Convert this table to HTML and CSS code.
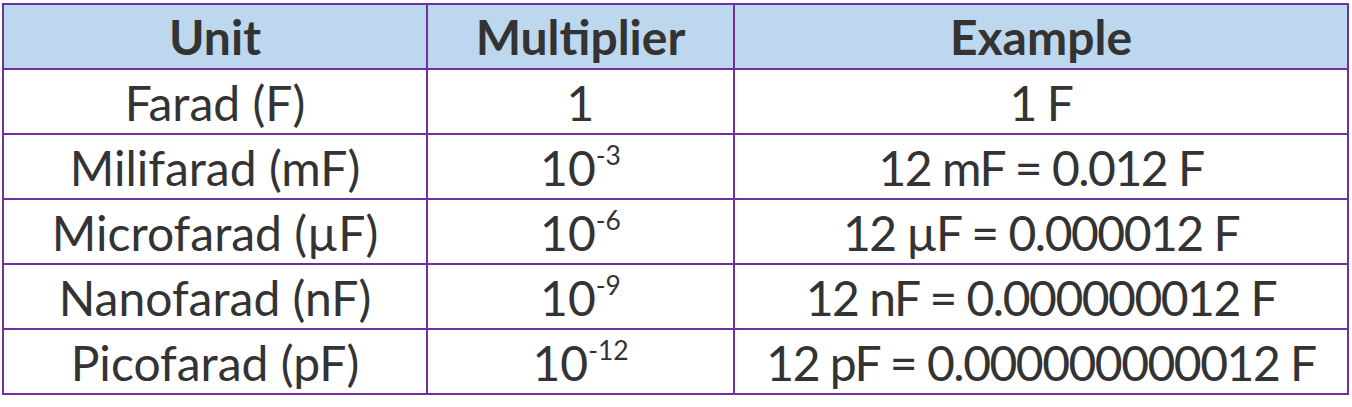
FILE: index.html
```html
<!DOCTYPE html>
<html>
<head>
<meta charset="utf-8">
<link rel="stylesheet" href="styles.css">
</head>
<body>
<table class="units">
  <colgroup>
    <col class="c1">
    <col class="c2">
    <col class="c3">
  </colgroup>
  <thead>
    <tr><th>Unit</th><th>Multiplier</th><th>Example</th></tr>
  </thead>
  <tbody>
    <tr><td>Farad (F)</td><td>1</td><td class="ex">1 F</td></tr>
    <tr><td>Milifarad (mF)</td><td>10<sup>-3</sup></td><td class="ex">12 mF = 0.012 F</td></tr>
    <tr><td>Microfarad (µF)</td><td>10<sup>-6</sup></td><td class="ex">12 µF = 0.000012 F</td></tr>
    <tr><td>Nanofarad (nF)</td><td>10<sup>-9</sup></td><td class="ex">12 nF = 0.000000012 F</td></tr>
    <tr><td>Picofarad (pF)</td><td>10<sup>-12</sup></td><td class="ex">12 pF = 0.000000000012 F</td></tr>
  </tbody>
</table>
</body>
</html>
```
FILE: styles.css
```css
html, body {
  margin: 0;
  padding: 0;
  background: #ffffff;
}

.units {
  margin: 3px 0 0 2px;
  width: 1345px;
  border-collapse: collapse;
  table-layout: fixed;
  font-family: Lato, "Liberation Sans", sans-serif;
  color: #333333;
}

.c1 { width: 424px; }
.c2 { width: 307px; }
.c3 { width: 614px; }

.units tr {
  height: 65px;
}

.units th,
.units td {
  border: 2px solid #7030a0;
  padding: 0;
  text-align: center;
  vertical-align: middle;
  font-size: 48px;
  line-height: 1;
}

.units th {
  background: #bdd7ee;
  font-weight: 700;
  padding-top: 0;
}

.units td {
  font-weight: 400;
  padding-top: 2px;
}

.units td.ex {
  letter-spacing: -1.5px;
}

.units sup {
  font-size: 0.55em;
  vertical-align: 0;
  position: relative;
  top: -0.78em;
  line-height: 0;
}
```
